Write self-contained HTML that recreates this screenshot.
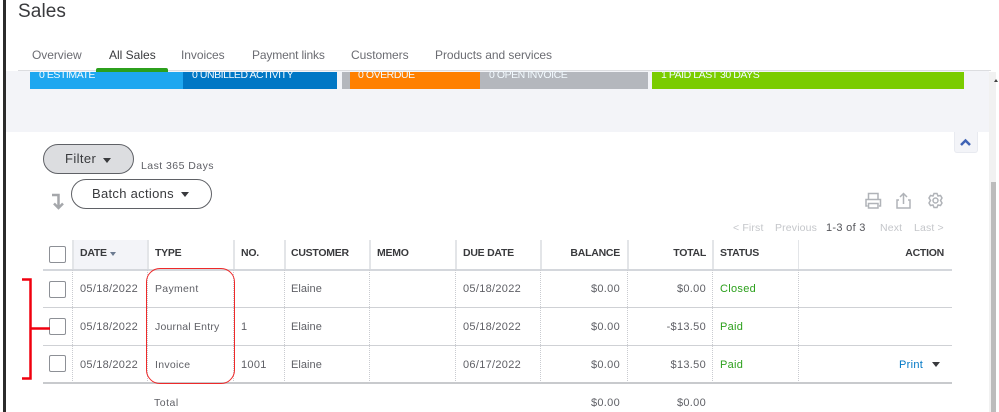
<!DOCTYPE html>
<html><head><meta charset="utf-8">
<style>
html,body{margin:0;padding:0;background:#fff}
#p{position:relative;width:999px;height:412px;overflow:hidden;background:#fff;font-family:"Liberation Sans",sans-serif;filter:blur(.3px)}
.b{position:absolute}
.t{position:absolute;white-space:nowrap;font-size:11px;line-height:14px;color:#5f6066;letter-spacing:.3px}
.r{text-align:right}
.h{font-weight:bold;color:#393a3d;font-size:10.5px;letter-spacing:-.25px}
.w{color:#f2faff;font-size:10.5px;letter-spacing:-.45px}
.g{color:#2ca01c}
.tab{font-size:12px;letter-spacing:-.05px;color:#6b6c72;top:48px}
.pg{font-size:10.5px;color:#c4c6ca;letter-spacing:.15px;top:221px}
.v{position:absolute;width:1px;top:270px;height:113px;border-left:1px dotted #c9cbd0}
.vh{position:absolute;width:2px;top:240px;height:29px;background:#e3e5e8}
.l{position:absolute;left:43px;width:909px;height:1px;background:#cfd1d5}
.c{position:absolute;left:49px;width:15px;height:15px;border:1px solid #8d9096;border-radius:2px;background:#fff}
.dn{position:absolute;width:0;height:0;border-left:4.5px solid transparent;border-right:4.5px solid transparent;border-top:5px solid #393a3d}
</style></head><body><div id="p">
<div class="b" style="left:3px;top:0;width:3px;height:412px;background:#2b2b2b"></div>
<div class="t" style="left:18px;top:1px;font-size:19px;line-height:22px;color:#393a3d;letter-spacing:.1px">Sales</div>

<div class="t tab" style="left:32px">Overview</div>
<div class="t tab" style="left:109px;letter-spacing:0;color:#393a3d">All Sales</div>
<div class="t tab" style="left:181px">Invoices</div>
<div class="t tab" style="left:252px;letter-spacing:-.15px">Payment links</div>
<div class="t tab" style="left:351px">Customers</div>
<div class="t tab" style="left:435px">Products and services</div>

<div class="b" style="left:6px;top:71px;width:983px;height:61px;background:#f3f4f8"></div>
<div class="b" style="left:18px;top:70px;width:973px;height:1px;background:#dcdde0"></div>
<div class="b" style="left:96px;top:68px;width:72px;height:4px;background:#2ca01c;border-radius:2px 2px 0 0"></div>

<div class="b" style="left:30px;top:72px;width:153px;height:17px;background:#1ea7f0"></div>
<div class="b" style="left:183px;top:72px;width:154px;height:17px;background:#0077c5"></div>
<div class="b" style="left:342px;top:72px;width:8px;height:17px;background:#b4b7bd"></div>
<div class="b" style="left:350px;top:72px;width:130px;height:17px;background:#ff8000"></div>
<div class="b" style="left:480px;top:72px;width:168px;height:17px;background:#b4b7bd"></div>
<div class="b" style="left:652px;top:72px;width:312px;height:17px;background:#7acc00"></div>
<div class="t w" style="left:39px;top:68px">0 ESTIMATE</div>
<div class="t w" style="left:192px;top:68px">0 UNBILLED ACTIVITY</div>
<div class="t w" style="left:358px;top:68px">0 OVERDUE</div>
<div class="t w" style="left:489px;top:68px">0 OPEN INVOICE</div>
<div class="t w" style="left:661px;top:68px">1 PAID LAST 30 DAYS</div>

<div class="b" style="left:989px;top:72px;width:7px;height:340px;background:#f1f1f1"></div>
<div class="b" style="left:991px;top:182px;width:5px;height:230px;background:#bcbcbc"></div>
<div class="b" style="left:994px;top:79px;width:0;height:0;border-left:2px solid transparent;border-right:2px solid transparent;border-bottom:3px solid #444"></div>

<div class="b" style="left:954px;top:132px;width:22px;height:20px;background:#f3f4f8;border:1px solid #e8eaf0;border-top:0;border-radius:0 0 3px 3px"></div>
<svg class="b" style="left:959px;top:138px" width="14" height="9"><path d="M2 7L6.500 2.500L11 7" fill="none" stroke="#3f63b5" stroke-width="2.500"/></svg>

<div class="b" style="left:43px;top:144px;width:89px;height:28px;background:#dcdde0;border:1px solid #5f6166;border-radius:15px"></div>
<div class="t" style="left:65px;top:152px;font-size:13px;color:#393a3d;letter-spacing:.4px">Filter</div>
<div class="dn" style="left:103px;top:158px"></div>
<div class="t" style="left:141px;top:159px;font-size:10.5px;letter-spacing:.45px">Last 365 Days</div>

<div class="b" style="left:71px;top:179px;width:139px;height:28px;background:#fff;border:1px solid #5f6166;border-radius:15px"></div>
<div class="t" style="left:92px;top:187px;font-size:13px;color:#393a3d;letter-spacing:.3px">Batch actions</div>
<div class="dn" style="left:181px;top:192px"></div>
<svg class="b" style="left:50px;top:192px" width="16" height="18"><path d="M2 3H8.500V16M4 11.500L8.500 16L13 11.500" fill="none" stroke="#a5a7ab" stroke-width="2.500"/></svg>

<svg class="b" style="left:865px;top:192px" width="80" height="18" fill="none" stroke="#b0b3b8" stroke-width="1.500">
<path d="M3.500 7V1.500H13V7M2.500 14H1V7.500H15.500V14H14M3.500 11.500H13V16H3.500Z"/>
<path d="M34 8H32V16H45V8H43M38.500 12V1.500M35 5L38.500 1.500L42 5"/>
<path d="M69 1.500L72 1.500L73 4L75.500 3.500L77 6L75.500 8.500L77 11L75.500 13.500L73 13L72 15.500H69L68 13L65.500 13.500L64 11L65.500 8.500L64 6L65.500 3.500L68 4Z"/><circle cx="70.500" cy="8.500" r="2.500"/>
</svg>

<div class="t pg" style="left:733px">&lt; First</div>
<div class="t pg" style="left:775px">Previous</div>
<div class="t" style="left:826px;top:221px;font-size:11px;color:#55565b;letter-spacing:.3px">1-3 of 3</div>
<div class="t pg" style="left:880px">Next</div>
<div class="t pg" style="left:914px">Last &gt;</div>

<div class="b" style="left:72px;top:240px;width:76px;height:29px;background:#f3f4f8"></div>
<div class="vh" style="left:72px"></div><div class="vh" style="left:147px"></div><div class="vh" style="left:233px"></div><div class="vh" style="left:284px"></div><div class="vh" style="left:369px"></div><div class="vh" style="left:455px"></div><div class="vh" style="left:540px"></div><div class="vh" style="left:627px"></div><div class="vh" style="left:712px"></div><div class="vh" style="left:798px;width:1px"></div>
<div class="b" style="left:43px;top:269px;width:909px;height:2px;background:#d4d7dc"></div>
<div class="l" style="top:307px"></div><div class="l" style="top:345px"></div>
<div class="b" style="left:43px;top:382px;width:909px;height:2px;background:#c8cacd"></div>
<div class="v" style="left:72px"></div><div class="v" style="left:147px"></div><div class="v" style="left:233px"></div><div class="v" style="left:284px"></div><div class="v" style="left:369px"></div><div class="v" style="left:455px"></div><div class="v" style="left:540px"></div><div class="v" style="left:627px"></div><div class="v" style="left:712px"></div><div class="v" style="left:798px"></div>

<div class="c" style="top:246px"></div><div class="c" style="top:281px"></div><div class="c" style="top:318px"></div><div class="c" style="top:355px"></div>

<div class="t h" style="left:80px;top:246px">DATE</div>
<div class="b" style="left:110px;top:252px;width:0;height:0;border-left:3px solid transparent;border-right:3px solid transparent;border-top:4px solid #6b7a90"></div>
<div class="t h" style="left:155px;top:246px">TYPE</div>
<div class="t h" style="left:241px;top:246px">NO.</div>
<div class="t h" style="left:291px;top:246px">CUSTOMER</div>
<div class="t h" style="left:377px;top:246px">MEMO</div>
<div class="t h" style="left:463px;top:246px">DUE DATE</div>
<div class="t h r" style="right:379px;top:246px">BALANCE</div>
<div class="t h r" style="right:293px;top:246px">TOTAL</div>
<div class="t h" style="left:720px;top:246px">STATUS</div>
<div class="t h r" style="right:55px;top:246px">ACTION</div>

<div class="t" style="left:80px;top:282px">05/18/2022</div>
<div class="t" style="left:155px;top:282px;font-size:10.5px;letter-spacing:.3px">Payment</div>
<div class="t" style="left:291px;top:282px;letter-spacing:.05px">Elaine</div>
<div class="t" style="left:463px;top:282px">05/18/2022</div>
<div class="t r" style="right:379px;top:282px">$0.00</div>
<div class="t r" style="right:293px;top:282px">$0.00</div>
<div class="t g" style="left:720px;top:282px">Closed</div>

<div class="t" style="left:80px;top:320px">05/18/2022</div>
<div class="t" style="left:155px;top:320px;font-size:10.5px;letter-spacing:.2px">Journal Entry</div>
<div class="t" style="left:241px;top:320px">1</div>
<div class="t" style="left:291px;top:320px;letter-spacing:.05px">Elaine</div>
<div class="t" style="left:463px;top:320px">05/18/2022</div>
<div class="t r" style="right:379px;top:320px">$0.00</div>
<div class="t r" style="right:293px;top:320px">-$13.50</div>
<div class="t g" style="left:720px;top:320px">Paid</div>

<div class="t" style="left:80px;top:358px">05/18/2022</div>
<div class="t" style="left:155px;top:358px;font-size:10.5px">Invoice</div>
<div class="t" style="left:241px;top:358px">1001</div>
<div class="t" style="left:291px;top:358px;letter-spacing:.05px">Elaine</div>
<div class="t" style="left:463px;top:358px">06/17/2022</div>
<div class="t r" style="right:379px;top:358px">$0.00</div>
<div class="t r" style="right:293px;top:358px">$13.50</div>
<div class="t g" style="left:720px;top:358px">Paid</div>
<div class="t" style="left:899px;top:358px;color:#0077c5">Print</div>
<div class="dn" style="left:932px;top:362px"></div>

<div class="t" style="left:154px;top:396px;font-size:10.5px;letter-spacing:.5px">Total</div>
<div class="t r" style="right:379px;top:396px">$0.00</div>
<div class="t r" style="right:293px;top:396px">$0.00</div>

<div class="b" style="left:146px;top:268px;width:87px;height:114px;border:1px solid #ee2a2a;border-radius:14px"></div>
<svg class="b" style="left:20px;top:276px" width="32" height="104"><path d="M2 3.500H10.500V102.500H2M10.500 52.500H30" fill="none" stroke="#f0000f" stroke-width="2.500"/></svg>
</div></body></html>
